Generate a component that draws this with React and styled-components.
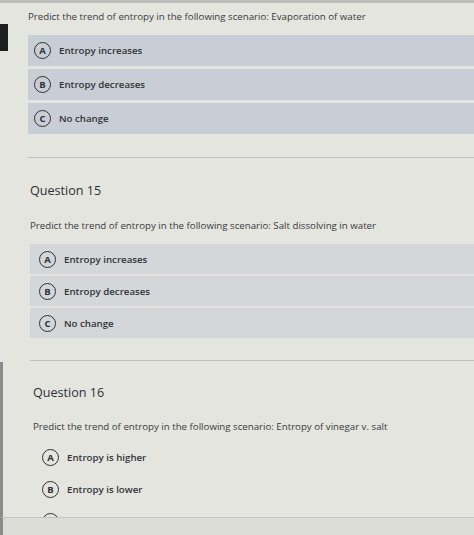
import React from "react";
import styled, { createGlobalStyle } from "styled-components";

const Global = createGlobalStyle`
  html, body { margin: 0; padding: 0; background: #e5e5e0; }
  body { font-family: "Open Sans", "Noto Sans", sans-serif; color: #3a3b3d; }
`;

const Page = styled.div`
  width: 474px;
  height: 535px;
  overflow: hidden;
  display: flex;
  flex-direction: column;
  background: #e5e5e0;
  position: relative;
`;

const TopStrip = styled.div`
  height: 3px;
  flex: none;
  background: #bcbdbb;
`;

const Section = styled.section`
  position: relative;
  flex: none;
  overflow: hidden;
  padding-left: ${p => p.$left}px;
  padding-top: ${p => p.$top}px;
  height: ${p => p.$h}px;
  box-sizing: border-box;
  display: flex;
  flex-direction: column;
  border-left: ${p => (p.$edge ? "3px solid #8a8b8c" : "none")};
`;

const Marker = styled.div`
  position: absolute;
  left: 0;
  top: 21px;
  width: 8px;
  height: 27px;
  background: #1d1e20;
`;

const Heading = styled.h2`
  margin: 0 0 ${p => p.$gap}px;
  font-size: 12.6px;
  font-weight: 500;
  color: #2e2f32;
  line-height: 20px;
`;

const Prompt = styled.p`
  margin: 0 0 ${p => p.$gap}px;
  font-size: 9.7px;
  font-weight: 500;
  line-height: 16px;
  color: #38393c;
  white-space: nowrap;
`;

const Options = styled.div`
  display: flex;
  flex-direction: column;
  flex: none;
  gap: ${p => p.$gap}px;
`;

const Option = styled.div`
  height: ${p => p.$h}px;
  flex: none;
  display: flex;
  align-items: center;
  gap: 8px;
  padding-left: ${p => p.$pad}px;
  background: ${p => p.$bg};
`;

const Letter = styled.span`
  width: 15px;
  height: 15px;
  border: 1.4px solid #2f3033;
  border-radius: 50%;
  display: inline-flex;
  align-items: center;
  justify-content: center;
  font-size: 9.5px;
  font-weight: 700;
  color: #2f3033;
  flex: none;
`;

const Label = styled.span`
  font-size: 9.7px;
  font-weight: 600;
  color: #323336;
`;

const Divider = styled.hr`
  margin: ${p => p.$m}px 0 0;
  border: none;
  border-top: 1px solid #bfc0bd;
  height: 0;
`;

const BottomStrip = styled.div`
  flex: 1;
  background: #dcdcd7;
  border-top: 1px solid #c3c4c1;
  border-left: 3px solid #8a8b8c;
`;

const sections = [
  {
    left: 28, top: 6, h: 156, bg: "#c9ced6", optH: 31, optGap: 3, pad: 6, promptGap: 10,
    prompt: "Predict the trend of entropy in the following scenario: Evaporation of water",
    options: ["Entropy increases", "Entropy decreases", "No change"],
    divider: 23, marker: true,
  },
  {
    left: 30, top: 22, h: 203, bg: "#d3d7d9", optH: 30, optGap: 2, pad: 9, promptGap: 10,
    heading: "Question 15", headingGap: 17,
    prompt: "Predict the trend of entropy in the following scenario: Salt dissolving in water",
    options: ["Entropy increases", "Entropy decreases", "No change"],
    divider: 22,
  },
];

function OptionList({ s }) {
  return (
    <Options $gap={s.optGap}>
      {s.options.map((o, i) => (
        <Option key={o} $h={s.optH} $pad={s.pad} $bg={s.bg}>
          <Letter>{"ABC"[i]}</Letter>
          <Label>{o}</Label>
        </Option>
      ))}
    </Options>
  );
}

export default function App() {
  return (
    <>
      <Global />
      <Page>
        <TopStrip />
        {sections.map((s, idx) => (
          <Section key={idx} $left={s.left} $top={s.top} $h={s.h}>
            {s.marker && <Marker />}
            {s.heading && <Heading $gap={s.headingGap}>{s.heading}</Heading>}
            <Prompt $gap={s.promptGap}>{s.prompt}</Prompt>
            <OptionList s={s} />
            <Divider $m={s.divider} />
          </Section>
        ))}
        <Section $left={30} $top={21} $h={155} $edge>
          <Heading $gap={16}>Question 16</Heading>
          <Prompt $gap={7}>
            Predict the trend of entropy in the following scenario: Entropy of vinegar v. salt
          </Prompt>
          <Options $gap={2}>
            <Option $h={30} $pad={9} $bg="transparent">
              <Letter>A</Letter>
              <Label>Entropy is higher</Label>
            </Option>
            <Option $h={30} $pad={9} $bg="transparent">
              <Letter>B</Letter>
              <Label>Entropy is lower</Label>
            </Option>
            <Option $h={30} $pad={9} $bg="transparent">
              <Letter aria-hidden="true" />
            </Option>
          </Options>
        </Section>
        <BottomStrip />
      </Page>
    </>
  );
}
